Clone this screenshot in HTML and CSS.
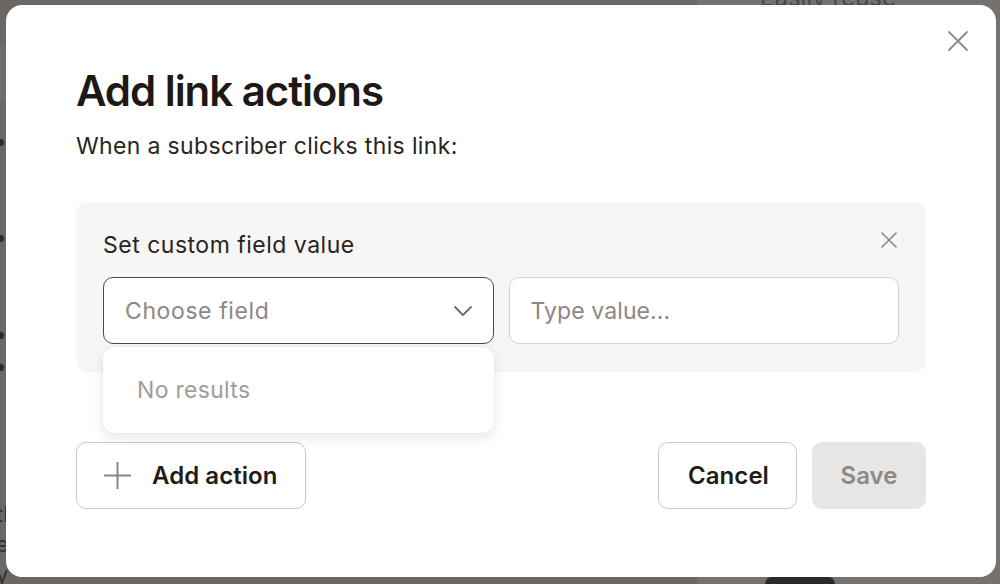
FILE: index.html
```html
<!DOCTYPE html>
<html lang="en">
<head>
<meta charset="utf-8">
<title>Add link actions</title>
<link rel="stylesheet" href="styles.css">
</head>
<body>
<div class="page">
  <aside class="page-left">
    <div class="band"></div>
    <ul class="bullets">
      <li class="b1"></li>
      <li class="b2"></li>
      <li class="b3"></li>
      <li class="b4"></li>
    </ul>
    <div class="frags">
      <span class="f1">tl</span>
      <span class="f2">e</span>
      <span class="f3">y</span>
    </div>
  </aside>
  <section class="page-right">
    <p class="reuse">Easily reuse</p>
    <div class="pill"></div>
  </section>
</div>

<div class="overlay">
  <div class="modal" role="dialog" aria-labelledby="dlg-title">
    <button class="modal-close" aria-label="Close">
      <svg width="24" height="24" viewBox="0 0 24 24"><path d="M3 3L21 21M21 3L3 21" fill="none" stroke="#8d8886" stroke-width="1.8" stroke-linecap="round"/></svg>
    </button>
    <h1 class="title" id="dlg-title">Add link actions</h1>
    <p class="subtitle">When a subscriber clicks this link:</p>

    <div class="action-card">
      <div class="action-head">
        <span class="action-label">Set custom field value</span>
        <button class="card-close" aria-label="Remove action">
          <svg width="16" height="16" viewBox="0 0 16 16"><path d="M1 1L15 15M15 1L1 15" fill="none" stroke="#8a8583" stroke-width="1.6" stroke-linecap="round"/></svg>
        </button>
      </div>
      <div class="action-fields">
        <div class="select-wrap">
          <div class="select">
            <span class="placeholder">Choose field</span>
            <svg class="chevron" width="18" height="10" viewBox="0 0 18 10"><path d="M1 1L9 9L17 1" fill="none" stroke="#6f6a68" stroke-width="1.8" stroke-linecap="round" stroke-linejoin="round"/></svg>
          </div>
          <div class="dropdown">No results</div>
        </div>
        <div class="input"><span class="placeholder placeholder-value">Type value...</span></div>
      </div>
    </div>

    <div class="footer">
      <button class="btn btn-add">
        <svg width="27" height="27" viewBox="0 0 27 27"><path d="M13.5 0V27M0 13.5H27" fill="none" stroke="#8a8482" stroke-width="2"/></svg>
        <span>Add action</span>
      </button>
      <div class="footer-right">
        <button class="btn btn-cancel">Cancel</button>
        <button class="btn btn-save" disabled>Save</button>
      </div>
    </div>
  </div>
</div>
</body>
</html>
```

FILE: styles.css
```css
* { box-sizing: border-box; }

html, body {
  margin: 0;
  padding: 0;
  width: 1000px;
  height: 584px;
  overflow: hidden;
  font-family: Inter, "Liberation Sans", sans-serif;
}

/* background page (dimmed) */
.page {
  display: flex;
  height: 584px;
}
.page-left {
  width: 697px;
  background: #6b6764;
  overflow: hidden;
}
.band {
  height: 102px;
  background: linear-gradient(#6b6764 0 45px, #716d6a 45px 102px);
}
.bullets {
  list-style: none;
  margin: 0;
  padding: 0;
}
.bullets li {
  width: 7px;
  height: 7px;
  border-radius: 50%;
  background: #2e2b29;
  margin-left: -3px;
}
.b1 { margin-top: 37px; }
.b2 { margin-top: 89px; }
.b3 { margin-top: 90px; }
.b4 { margin-top: 25px; }
.frags {
  display: flex;
  flex-direction: column;
  margin-top: 128px;
  margin-left: -4px;
  font-size: 22px;
  line-height: 30px;
  color: #332f2d;
}
.page-right {
  flex: 1;
  display: flex;
  flex-direction: column;
  background: #75716e;
}
.reuse {
  margin: -17px 0 0 63px;
  font-size: 24px;
  color: #4c4846;
}
.pill {
  margin: auto 0 0 68px;
  width: 70px;
  height: 7px;
  border-radius: 10px 10px 0 0;
  background: #2b2927;
}

/* modal */
.overlay {
  position: fixed;
  inset: 0;
  display: flex;
  padding: 5px 4px 7px 6px;
}
.modal {
  position: relative;
  flex: 1;
  background: #ffffff;
  border-radius: 16px;
  padding: 60px 70px 68px;
  color: #2a2421;
}
.modal-close {
  position: absolute;
  top: 24px;
  right: 26px;
  padding: 0;
  border: 0;
  background: none;
  line-height: 0;
}
.title {
  margin: 0 0 14px;
  font-size: 42px;
  line-height: 52px;
  font-weight: 600;
  letter-spacing: -1.05px;
  color: #1e1916;
}
.subtitle {
  margin: 0 0 41px;
  font-size: 23px;
  line-height: 30px;
  letter-spacing: 0.35px;
  color: #2a2421;
}

.action-card {
  background: #f6f6f6;
  border-radius: 12px;
  padding: 28px 27px 28px;
}
.action-head {
  display: flex;
  justify-content: space-between;
  align-items: flex-start;
  margin-bottom: 17px;
}
.action-label {
  font-size: 23px;
  line-height: 30px;
  letter-spacing: 0.5px;
  color: #2a2421;
}
.card-close {
  margin: 2px 2px 0 0;
  padding: 0;
  border: 0;
  background: none;
  line-height: 0;
}
.action-fields {
  display: grid;
  grid-template-columns: 1fr 1fr;
  gap: 15px;
}
.select-wrap {
  position: relative;
}
.select, .input {
  height: 67px;
  border-radius: 10px;
  background: #ffffff;
  display: flex;
  align-items: center;
  padding: 0 21px;
}
.select {
  border: 1.5px solid #504a47;
  justify-content: space-between;
}
.input {
  border: 1.5px solid #d6d2d0;
}
.placeholder {
  font-size: 23px;
  letter-spacing: 0.6px;
  color: #8e8784;
}
.placeholder-value {
  letter-spacing: 0.1px;
}
.dropdown {
  position: absolute;
  top: calc(100% + 3px);
  left: 0;
  right: 0;
  height: 86px;
  display: flex;
  align-items: center;
  padding-left: 34px;
  background: #ffffff;
  border-radius: 12px;
  box-shadow: 0 4px 14px rgba(0, 0, 0, 0.10), 0 0 2px rgba(0, 0, 0, 0.05);
  font-size: 23px;
  letter-spacing: 0.3px;
  color: #a19b99;
  z-index: 2;
}

.footer {
  display: flex;
  justify-content: space-between;
  margin-top: 70px;
}
.footer-right {
  display: flex;
  gap: 15px;
}
.btn {
  height: 67px;
  border: 1.5px solid #cbc7c5;
  border-radius: 10px;
  background: #ffffff;
  font-family: inherit;
  font-size: 24px;
  font-weight: 600;
  letter-spacing: 0.05px;
  color: #221c19;
  display: flex;
  align-items: center;
  justify-content: center;
  padding: 0;
}
.btn-add {
  width: 230px;
  justify-content: flex-start;
  padding-left: 27px;
  gap: 21px;
}
.btn-cancel {
  width: 139px;
  padding-left: 2px;
}
.btn-save {
  width: 114px;
  background: #e7e6e5;
  border-color: #e7e6e5;
  color: #8e8987;
}
```
